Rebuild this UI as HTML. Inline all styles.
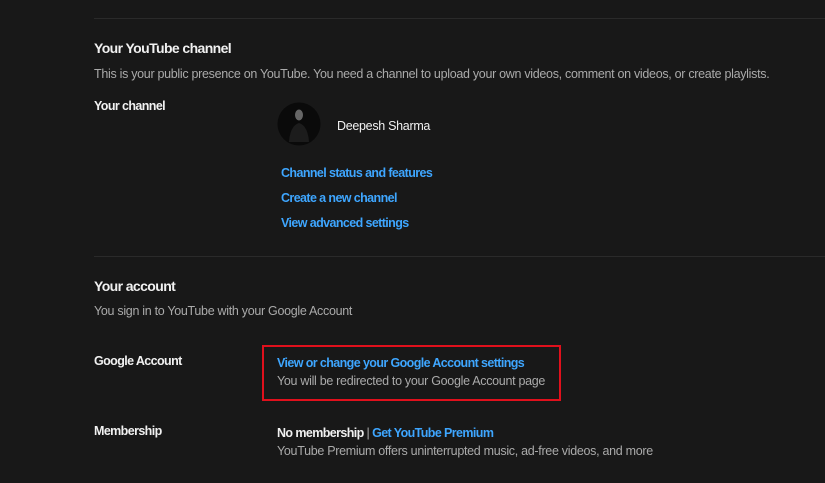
<!DOCTYPE html>
<html><head><meta charset="utf-8"><style>
body{margin:0;width:825px;height:483px;background:#181818;overflow:hidden;font-family:"Liberation Sans",sans-serif;position:relative}
.a{position:absolute;white-space:nowrap;line-height:16px}
.h{color:#f1f1f1;font-size:14px;font-weight:bold;letter-spacing:-0.6px}
.l{color:#f1f1f1;font-size:12.5px;font-weight:bold;letter-spacing:-0.6px}
.g{color:#aaa;font-size:12.5px;letter-spacing:-0.3px}
.b{color:#3ea6ff;font-size:12.5px;font-weight:bold;letter-spacing:-0.6px}
.w{color:#f1f1f1;font-size:12.5px;letter-spacing:-0.3px}
.hr{position:absolute;left:94px;right:0;height:1px;background:#2a2a2a}
</style></head><body>
<div class="hr" style="top:18px"></div>
<div class="a h" style="left:94px;top:40px">Your YouTube channel</div>
<div class="a g" style="left:94px;top:66px">This is your public presence on YouTube. You need a channel to upload your own videos, comment on videos, or create playlists.</div>
<div class="a l" style="left:94px;top:98px">Your channel</div>
<svg style="position:absolute;left:277px;top:102px" width="44" height="44" viewBox="0 0 44 44">
<circle cx="22" cy="22" r="21.5" fill="#0a0a0a"/>
<ellipse cx="22" cy="13" rx="4" ry="5.5" fill="#666"/>
<path d="M12 40 Q13 24 22 21 Q31 24 32 40 Z" fill="#1c1c1c"/>
</svg>
<div class="a w" style="left:337px;top:118px">Deepesh Sharma</div>
<div class="a b" style="left:281px;top:165px">Channel status and features</div>
<div class="a b" style="left:281px;top:190px">Create a new channel</div>
<div class="a b" style="left:281px;top:215px">View advanced settings</div>
<div class="hr" style="top:256px"></div>
<div class="a h" style="left:94px;top:278px">Your account</div>
<div class="a g" style="left:94px;top:303px">You sign in to YouTube with your Google Account</div>
<div class="a l" style="left:94px;top:353px">Google Account</div>
<div style="position:absolute;left:262px;top:345px;width:295px;height:52px;border:2.5px solid #e0101c"></div>
<div class="a b" style="left:277px;top:355px">View or change your Google Account settings</div>
<div class="a g" style="left:277px;top:373px">You will be redirected to your Google Account page</div>
<div class="a l" style="left:94px;top:423px">Membership</div>
<div class="a l" style="left:277px;top:425px">No membership <span style="color:#aaa;font-weight:normal">|</span> <span style="color:#3ea6ff">Get YouTube Premium</span></div>
<div class="a g" style="left:277px;top:443px">YouTube Premium offers uninterrupted music, ad-free videos, and more</div>
</body></html>
